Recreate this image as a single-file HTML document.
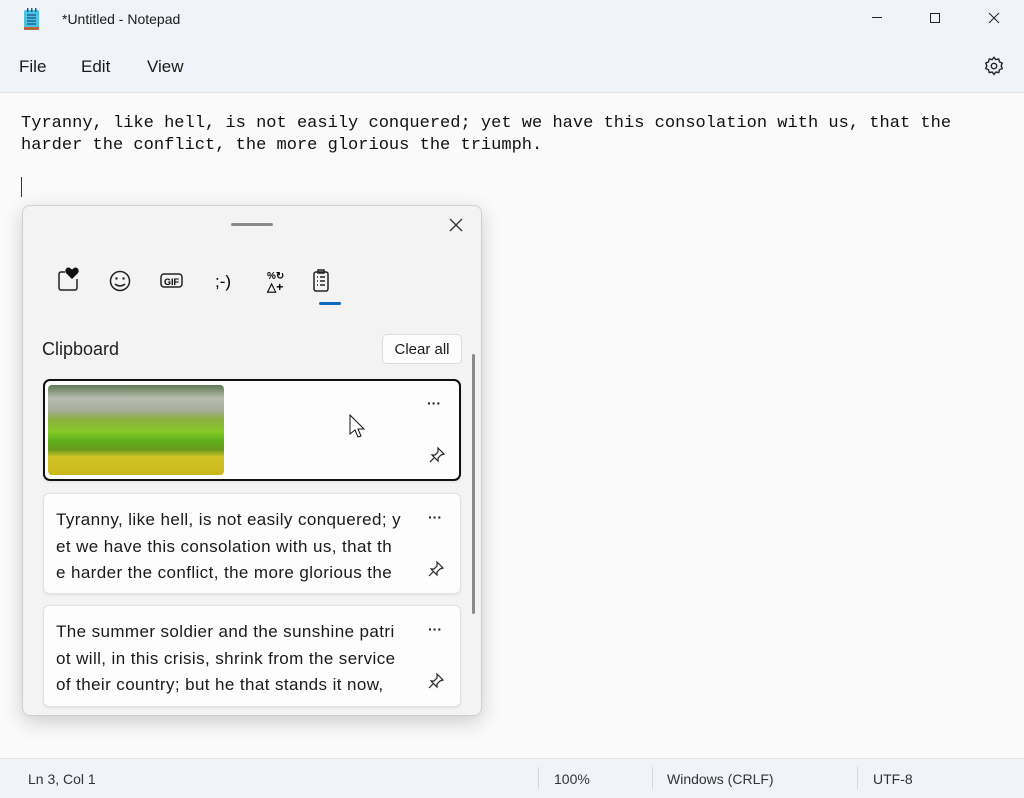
<!DOCTYPE html>
<html><head><meta charset="utf-8"><style>
*{margin:0;padding:0;box-sizing:border-box}
body{width:1024px;height:798px;background:#f0f3f9;font-family:"Liberation Sans",sans-serif;position:relative;overflow:hidden;color:#1a1a1a}
.abs{position:absolute}
.title{left:62px;top:11px;font-size:14px}
.menu{top:57px;font-size:17px}
.editor{left:0;top:92px;width:1024px;height:666px;background:#fafafa;border-top:1px solid #e3e3e3}
.txt{left:21px;top:113px;font-family:"Liberation Mono",monospace;font-size:17.05px;line-height:22px;white-space:pre;color:#111}
.status{left:0;top:758px;width:1024px;height:40px;background:#f0f3f9;border-top:1px solid #e3e3e3;font-size:14px;color:#333}
.status span{position:absolute;top:12px}
.sep{position:absolute;top:8px;width:1px;height:22px;background:#d8d8d8}
.panel{left:22px;top:205px;width:460px;height:511px;background:#f3f3f3;border:1px solid #cfcfcf;border-radius:8px;box-shadow:0 6px 20px rgba(0,0,0,.18)}
.card{position:absolute;left:20px;width:418px;background:#fdfdfd;border:1px solid #e2e2e2;border-radius:6px;box-shadow:0 1px 2px rgba(0,0,0,.08)}
.card p{position:absolute;left:12px;top:13px;font-size:17px;line-height:26.5px;color:#1a1a1a;white-space:pre;letter-spacing:0.4px}
.dots{position:absolute;right:18px;font-size:14px;font-weight:bold}
</style></head><body>
<svg class="abs" style="left:22px;top:8px" width="20" height="24" viewBox="0 0 20 24"><rect x="2" y="2" width="15" height="18" rx="2" fill="#4cc2e6"/><rect x="2" y="19" width="15" height="3" fill="#b5683a"/><g stroke="#1f5f86" stroke-width="1.4"><line x1="5" y1="7" x2="14" y2="7"/><line x1="5" y1="10" x2="14" y2="10"/><line x1="5" y1="13" x2="14" y2="13"/><line x1="5" y1="16" x2="14" y2="16"/></g><g fill="#1f5f86"><rect x="5" y="0" width="1.5" height="4"/><rect x="9" y="0" width="1.5" height="4"/><rect x="13" y="0" width="1.5" height="4"/></g></svg>
<div class="abs title">*Untitled - Notepad</div>
<svg class="abs" style="left:862px;top:8px" width="145" height="20"><g stroke="#222" stroke-width="1" fill="none"><line x1="10" y1="9.5" x2="20" y2="9.5"/><rect x="68.5" y="5.5" width="9" height="9"/><path d="M127 5L137 15M137 5L127 15"/></g></svg>
<div class="abs menu" style="left:19px">File</div>
<div class="abs menu" style="left:81px">Edit</div>
<div class="abs menu" style="left:147px">View</div>
<svg class="abs" style="left:983px;top:55px" width="22" height="22" viewBox="0 0 24 24"><g fill="none" stroke="#222" stroke-width="1.5"><circle cx="12" cy="12" r="3"/><path d="M12 2.5l2 2.5 3.2-.6.8 3.1 3 1.3-1.2 3 1.2 3-3 1.3-.8 3.1-3.2-.6-2 2.5-2-2.5-3.2.6-.8-3.1-3-1.3 1.2-3-1.2-3 3-1.3.8-3.1 3.2.6z"/></g></svg>
<div class="abs editor"></div>
<div class="abs txt">Tyranny, like hell, is not easily conquered; yet we have this consolation with us, that the
harder the conflict, the more glorious the triumph.</div>
<div class="abs" style="left:21px;top:177px;width:1px;height:20px;background:#333"></div>
<div class="abs status"><span style="left:28px">Ln 3, Col 1</span><div class="sep" style="left:538px"></div><span style="left:554px">100%</span><div class="sep" style="left:652px"></div><span style="left:667px">Windows (CRLF)</span><div class="sep" style="left:857px"></div><span style="left:873px">UTF-8</span></div>

<div class="abs panel">
 <div class="abs" style="left:208px;top:17px;width:42px;height:3px;border-radius:2px;background:#8a8a8a"></div>
 <svg class="abs" style="left:426px;top:12px" width="14" height="14"><path d="M1 1L13 13M13 1L1 13" stroke="#333" stroke-width="1.3"/></svg>
 <svg class="abs" style="left:30px;top:58px" width="300" height="30" viewBox="0 0 300 30">
  <g fill="none" stroke="#222" stroke-width="1.5">
   <path d="M12 8H8a2 2 0 0 0-2 2v14a2 2 0 0 0 2 2h14a2 2 0 0 0 2-2v-9"/>
   <circle cx="67" cy="17" r="9.5"/><path d="M62 20q5 4 10 0"/>
   <rect x="108" y="10" width="21" height="13" rx="3"/>
   <rect x="261" y="8" width="14" height="19" rx="2"/><rect x="265" y="6" width="6" height="3"/>
   <path d="M264 13h1M267 13h5M264 17h1M267 17h5M264 21h1M267 21h5"/>
  </g>
  <path d="M19 15l-6-6c-2-3 1-7 4-5l2 1.5 2-1.5c3-2 6 2 4 5z" fill="#111"/>
  <circle cx="63.5" cy="14.5" r="1.2" fill="#222"/><circle cx="70.5" cy="14.5" r="1.2" fill="#222"/>
  <text x="111" y="21" font-size="9" font-weight="bold" font-family="Liberation Sans">GIF</text>
  <text x="162" y="23" font-size="17" font-family="Liberation Sans">;-)</text>
  <text x="214" y="15" font-size="10" font-weight="bold" font-family="Liberation Sans">%↻</text>
  <text x="214" y="27" font-size="12" font-weight="bold" font-family="Liberation Sans">△+</text>
 </svg>
 <div class="abs" style="left:296px;top:96px;width:22px;height:3px;border-radius:2px;background:#0f6cbd"></div>
 <div class="abs" style="left:19px;top:133px;font-size:18px;color:#222">Clipboard</div>
 <div class="abs" style="left:359px;top:128px;width:80px;height:30px;background:#fdfdfd;border:1px solid #dcdcdc;border-radius:5px;font-size:15px;text-align:center;line-height:29px">Clear all</div>
 <div class="abs" style="left:449px;top:148px;width:3px;height:260px;background:#8a8a8a;border-radius:2px"></div>
 <div class="card" style="top:173px;height:102px;border:2.5px solid #111;border-radius:7px">
  <div class="abs" style="left:3px;top:4px;width:176px;height:90px;border-radius:4px;overflow:hidden;background:linear-gradient(180deg,#5f7a55 0%,#b9bdb0 15%,#a7ad9c 28%,#8db040 38%,#86c826 52%,#5fb01e 62%,#6a9a1c 72%,#d0c426 80%,#c9b81c 100%)"></div>
  <svg class="abs" style="left:303px;top:33px" width="18" height="26"><path d="M2 1v19l5-4 3 7 3-1-3-7h6z" fill="#fff" stroke="#111" stroke-width="1"/></svg>
  <div class="dots" style="top:14px">···</div>
  <svg class="abs" style="left:383px;top:65px" width="18" height="18" viewBox="0 0 18 18"><path d="M10 2l6 6-3 1-3 3 0 3-6-6 3 0 3-3zM6 12l-4 4" fill="none" stroke="#222" stroke-width="1.2"/></svg>
 </div>
 <div class="card" style="top:287px;height:101px"><p>Tyranny, like hell, is not easily conquered; y
et we have this consolation with us, that th
e harder the conflict, the more glorious the</p>
  <div class="dots" style="top:15px">···</div>
  <svg class="abs" style="left:383px;top:66px" width="18" height="18" viewBox="0 0 18 18"><path d="M10 2l6 6-3 1-3 3 0 3-6-6 3 0 3-3zM6 12l-4 4" fill="none" stroke="#222" stroke-width="1.2"/></svg>
 </div>
 <div class="card" style="top:399px;height:102px"><p>The summer soldier and the sunshine patri
ot will, in this crisis, shrink from the service
of their country; but he that stands it now,</p>
  <div class="dots" style="top:15px">···</div>
  <svg class="abs" style="left:383px;top:66px" width="18" height="18" viewBox="0 0 18 18"><path d="M10 2l6 6-3 1-3 3 0 3-6-6 3 0 3-3zM6 12l-4 4" fill="none" stroke="#222" stroke-width="1.2"/></svg>
 </div>
</div>
</body></html>
